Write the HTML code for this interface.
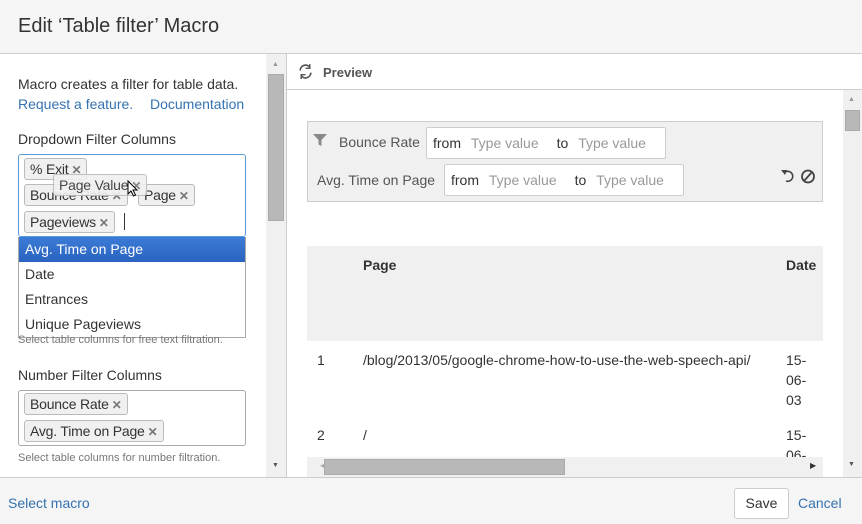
<!DOCTYPE html>
<html><head><meta charset="utf-8"><style>
*{box-sizing:border-box}
body{margin:0;width:862px;height:524px;overflow:hidden;font-family:"Liberation Sans",Arial,sans-serif;font-size:14px;color:#333;background:#fff;position:relative}
.a{position:absolute}
.tag{position:absolute;height:22px;border:1px solid #bbb;border-radius:3px;background:#f0f0f0;padding:0 5px;line-height:20px;font-size:14px;letter-spacing:-0.2px;color:#333;white-space:nowrap}
.tag b{color:#777;font-weight:bold;margin-left:3px;font-size:12px}
.link{color:#3572b0}
.inp{position:absolute;background:#fff;border:1px solid #ccc;border-radius:2px;height:32px;line-height:30px;padding-left:6px;font-size:14px}
.ph{color:#999}
</style></head><body>
<div class="a" style="left:0;top:0;width:862px;height:54px;background:#f5f5f5;border-bottom:1px solid #ccc"></div>
<div class="a" style="left:18px;top:15px;font-size:20px;color:#333">Edit ‘Table filter’ Macro</div>
<div class="a" style="left:18px;top:76px;font-size:14px">Macro creates a filter for table data.</div>
<div class="a link" style="left:18px;top:96px">Request a feature.</div>
<div class="a link" style="left:150px;top:96px">Documentation</div>
<div class="a" style="left:18px;top:131px">Dropdown Filter Columns</div>
<div class="a" style="left:18px;top:154px;width:228px;height:83px;border:1px solid #5b9bd5;border-radius:3px"></div>
<div class="tag" style="left:24px;top:158px">% Exit<b>✕</b></div>
<div class="tag" style="left:24px;top:184px">Bounce Rate<b>✕</b></div>
<div class="tag" style="left:138px;top:184px">Page<b>✕</b></div>
<div class="tag" style="left:53px;top:174px;opacity:.9">Page Value<b>✕</b></div>
<div class="tag" style="left:24px;top:211px">Pageviews<b>✕</b></div>
<div class="a" style="left:124px;top:213px;width:1px;height:17px;background:#333"></div>
<svg class="a" style="left:127px;top:180px" width="12" height="18" viewBox="0 0 12 18"><path d="M1 1 L1 14 L4 11 L6.5 16 L8.5 15 L6 10 L10 10 Z" fill="#fff" stroke="#000" stroke-width="1"/></svg>
<div class="a" style="left:18px;top:237px;width:228px;height:101px;border:1px solid #aaa;border-top:none;background:#fff"></div>
<div class="a" style="left:19px;top:237px;width:226px;height:25px;background:linear-gradient(#3b7bd6,#2a63c0);color:#fff;padding-left:6px;line-height:25px">Avg. Time on Page</div>
<div class="a" style="left:25px;top:266px">Date</div>
<div class="a" style="left:25px;top:291px">Entrances</div>
<div class="a" style="left:25px;top:316px">Unique Pageviews</div>
<div class="a" style="left:18px;top:334px;font-size:11px;color:#777">Select table columns for free text filtration.</div>
<div class="a" style="left:18px;top:367px">Number Filter Columns</div>
<div class="a" style="left:18px;top:390px;width:228px;height:56px;border:1px solid #aaa;border-radius:3px"></div>
<div class="tag" style="left:24px;top:393px">Bounce Rate<b>✕</b></div>
<div class="tag" style="left:24px;top:420px">Avg. Time on Page<b>✕</b></div>
<div class="a" style="left:18px;top:452px;font-size:11px;color:#777">Select table columns for number filtration.</div>
<div class="a" style="left:266px;top:54px;width:20px;height:423px;background:#f0f0f0"></div>
<div class="a" style="left:272px;top:61px;font-size:7px;color:#999">▲</div>
<div class="a" style="left:268px;top:74px;width:16px;height:147px;background:#b8b8b8;border:1px solid #aaa"></div>
<div class="a" style="left:272px;top:462px;font-size:7px;color:#555">▼</div>
<div class="a" style="left:286px;top:54px;width:1px;height:423px;background:#ccc"></div>
<svg class="a" style="left:297px;top:63px" width="17" height="17" viewBox="0 0 16 16"><path d="M3 7 A5 5 0 0 1 12 4 M13 9 A5 5 0 0 1 4 12" fill="none" stroke="#555" stroke-width="1.6"/><path d="M12 1 L12 5 L8 5" fill="none" stroke="#555" stroke-width="1.4"/><path d="M4 15 L4 11 L8 11" fill="none" stroke="#555" stroke-width="1.4"/></svg>
<div class="a" style="left:323px;top:65px;font-weight:bold;color:#555;font-size:13px">Preview</div>
<div class="a" style="left:287px;top:89px;width:575px;height:1px;background:#ccc"></div>
<div class="a" style="left:307px;top:121px;width:516px;height:81px;background:#f0f0f0;border:1px solid #ccc"></div>
<svg class="a" style="left:312px;top:133px" width="16" height="14" viewBox="0 0 16 14"><path d="M1 1 H15 L9.5 7 V13 L6.5 11.5 V7 Z" fill="#888"/></svg>
<div class="a" style="left:339px;top:134px;color:#555">Bounce Rate</div>
<div class="inp" style="left:426px;top:127px;width:240px">from <span class="ph" style="margin-left:6px">Type value</span><span style="margin-left:18px">to</span> <span class="ph" style="margin-left:6px">Type value</span></div>
<div class="a" style="left:317px;top:172px;color:#555">Avg. Time on Page</div>
<div class="inp" style="left:444px;top:164px;width:240px">from <span class="ph" style="margin-left:6px">Type value</span><span style="margin-left:18px">to</span> <span class="ph" style="margin-left:6px">Type value</span></div>
<svg class="a" style="left:780px;top:168px" width="38" height="16" viewBox="0 0 38 16"><path d="M4 5 A5 5 0 1 1 6 13" fill="none" stroke="#444" stroke-width="1.6"/><path d="M1 2 L5 7 L7 2 Z" fill="#444"/><circle cx="28" cy="8.5" r="6" fill="none" stroke="#444" stroke-width="1.8"/><path d="M24 13 L32 4" stroke="#444" stroke-width="1.8"/></svg>
<div class="a" style="left:307px;top:246px;width:516px;height:95px;background:#f0f0f0"></div>
<div class="a" style="left:363px;top:257px;font-weight:bold">Page</div>
<div class="a" style="left:786px;top:257px;font-weight:bold">Date</div>
<div class="a" style="left:317px;top:352px">1</div>
<div class="a" style="left:363px;top:352px">/blog/2013/05/google-chrome-how-to-use-the-web-speech-api/</div>
<div class="a" style="left:786px;top:350px;line-height:20px">15-<br>06-<br>03</div>
<div class="a" style="left:317px;top:427px">2</div>
<div class="a" style="left:363px;top:427px">/</div>
<div class="a" style="left:786px;top:425px;line-height:20px;height:32px;overflow:hidden">15-<br>06-</div>
<div class="a" style="left:307px;top:457px;width:516px;height:20px;background:#f0f0f0"></div>
<div class="a" style="left:320px;top:461px;font-size:8px;color:#aaa">◀</div>
<div class="a" style="left:324px;top:459px;width:241px;height:16px;background:#b8b8b8;border:1px solid #aaa"></div>
<div class="a" style="left:810px;top:461px;font-size:8px;color:#333">▶</div>
<div class="a" style="left:843px;top:90px;width:19px;height:387px;background:#f0f0f0"></div>
<div class="a" style="left:848px;top:96px;font-size:7px;color:#999">▲</div>
<div class="a" style="left:845px;top:110px;width:15px;height:21px;background:#b8b8b8;border:1px solid #aaa"></div>
<div class="a" style="left:848px;top:461px;font-size:7px;color:#555">▼</div>
<div class="a" style="left:0;top:477px;width:862px;height:47px;background:#f5f5f5;border-top:1px solid #ccc"></div>
<div class="a link" style="left:8px;top:495px">Select macro</div>
<div class="a" style="left:734px;top:488px;width:55px;height:31px;border:1px solid #ccc;border-radius:3px;background:#fff;text-align:center;line-height:29px">Save</div>
<div class="a link" style="left:798px;top:495px">Cancel</div>
</body></html>
